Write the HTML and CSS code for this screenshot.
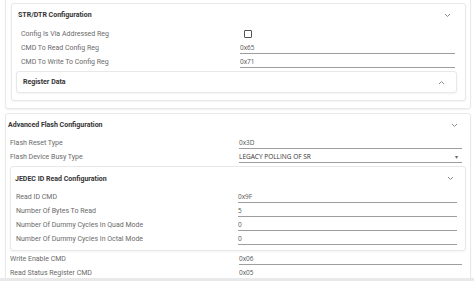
FILE: index.html
```html
<!DOCTYPE html>
<html lang="en">
<head>
  <meta charset="UTF-8" />
  <title>Flash Configuration</title>
  <link rel="stylesheet" href="styles.css">
</head>
<body>

  <!-- Previous section (scrolled) -->
  <div class="panel panel-top">
    <div class="card str-card">
      <div class="card-head">
        <span>STR/DTR Configuration</span>
        <svg class="chev" width="7" height="5" viewBox="0 0 7 5"><path d="M1 1l2.5 2.5L6 1" /></svg>
      </div>
      <div class="rows">
        <div class="row">
          <label>Config Is Via Addressed Reg</label>
          <span class="check"></span>
        </div>
        <div class="row">
          <label>CMD To Read Config Reg</label>
          <div class="field">0x65</div>
        </div>
        <div class="row">
          <label>CMD To Write To Config Reg</label>
          <div class="field">0x71</div>
        </div>
      </div>
      <div class="card sub-card">
        <div class="card-head">
          <span>Register Data</span>
          <svg class="chev" width="7" height="5" viewBox="0 0 7 5"><path d="M1 4l2.5-2.5L6 4" /></svg>
        </div>
      </div>
    </div>
  </div>

  <!-- Advanced Flash -->
  <div class="panel panel-adv">
    <div class="card-head">
      <span>Advanced Flash Configuration</span>
      <svg class="chev" width="7" height="5" viewBox="0 0 7 5"><path d="M1 1l2.5 2.5L6 1" /></svg>
    </div>
    <div class="rows">
      <div class="row">
        <label>Flash Reset Type</label>
        <div class="field">0x3D</div>
      </div>
      <div class="row">
        <label>Flash Device Busy Type</label>
        <div class="field select">LEGACY POLLING OF SR <span class="caret">&#9662;</span></div>
      </div>
    </div>

    <div class="card jedec-card">
      <div class="card-head">
        <span>JEDEC ID Read Configuration</span>
        <svg class="chev" width="7" height="5" viewBox="0 0 7 5"><path d="M1 1l2.5 2.5L6 1" /></svg>
      </div>
      <div class="rows">
        <div class="row">
          <label>Read ID CMD</label>
          <div class="field">0x9F</div>
        </div>
        <div class="row">
          <label>Number Of Bytes To Read</label>
          <div class="field">5</div>
        </div>
        <div class="row">
          <label>Number Of Dummy Cycles In Quad Mode</label>
          <div class="field">0</div>
        </div>
        <div class="row">
          <label>Number Of Dummy Cycles In Octal Mode</label>
          <div class="field">0</div>
        </div>
      </div>
    </div>

    <div class="rows">
      <div class="row">
        <label>Write Enable CMD</label>
        <div class="field">0x06</div>
      </div>
      <div class="row">
        <label>Read Status Register CMD</label>
        <div class="field">0x05</div>
      </div>
    </div>
  </div>

  <div class="hscroll"></div>

</body>
</html>
```

FILE: styles.css
```css
* {
  box-sizing: border-box;
  margin: 0;
  padding: 0;
}

body {
  font-family: Roboto, 'Liberation Sans', sans-serif;
  font-size: 7px;
  color: #6a6a6a;
  background: #fff;
  width: 474px;
  height: 281px;
  overflow: hidden;
  padding: 0 3px 0 5px;
}

/* Panels & cards */
.panel {
  border: 1px solid #e9e9e9;
  border-radius: 3px;
  box-shadow: 0 1px 2px rgba(0, 0, 0, 0.06);
  background: #fff;
}

.panel-top {
  margin-top: -20px;
  padding: 22px 4px 7px 5px;
}

.panel-adv {
  margin-top: 4px;
}

.card {
  border: 1px solid #e8e8e8;
  border-radius: 3px;
  box-shadow: 0 1px 2px rgba(0, 0, 0, 0.05);
  background: #fff;
}

.card-head {
  display: flex;
  justify-content: space-between;
  align-items: center;
  height: 22px;
  font-weight: 700;
  color: #333;
  font-size: 7px;
}

.chev {
  fill: none;
  stroke: #8a8a8a;
  stroke-width: 1;
}

/* STR/DTR */
.str-card {
  padding-bottom: 7px;
}

.str-card > .card-head {
  padding: 0 14px 0 6px;
}

.str-card > .rows {
  padding: 1px 10px 0 9px;
}

.str-card .row label {
  width: 219px;
}

.sub-card {
  margin: 2px 8px 0 4px;
}

.sub-card .card-head {
  height: 20px;
  padding: 0 11px 0 6px;
}

/* Advanced */
.panel-adv > .card-head {
  height: 22px;
  padding: 0 12px 0 2px;
}

.panel-adv > .rows {
  padding: 0 8px 0 4px;
}

.panel-adv > .rows:first-of-type {
  padding-top: 1px;
}

.panel-adv > .rows .row label {
  width: 229px;
}

.jedec-card {
  margin: 2px 4px 1px 4px;
  padding-bottom: 4px;
}

.jedec-card .card-head {
  height: 23px;
  padding: 0 11px 0 4px;
}

.jedec-card .rows {
  padding: 0 8px 0 5px;
}

.jedec-card .row label {
  width: 222px;
}

/* Rows */
.row {
  display: flex;
  align-items: center;
  height: 14px;
}

.row label {
  flex-shrink: 0;
  white-space: nowrap;
}

.field {
  flex-grow: 1;
  font-family: 'Open Sans', sans-serif;
  font-size: 6.5px;
  color: #555;
  height: 11px;
  line-height: 10px;
  margin-top: 1px;
  border-bottom: 1px solid #9e9e9e;
}

.select {
  display: flex;
  justify-content: space-between;
  color: #333;
}

.caret {
  font-size: 6px;
  color: #666;
  padding-right: 4px;
}

.check {
  width: 8px;
  height: 8px;
  margin-left: 4px;
  border: 1px solid #555;
  border-radius: 1px;
}

/* Horizontal scrollbar overlay */
.hscroll {
  position: fixed;
  left: 0;
  right: 0;
  bottom: 0;
  height: 3px;
  background: #e9e9e9;
}
```
